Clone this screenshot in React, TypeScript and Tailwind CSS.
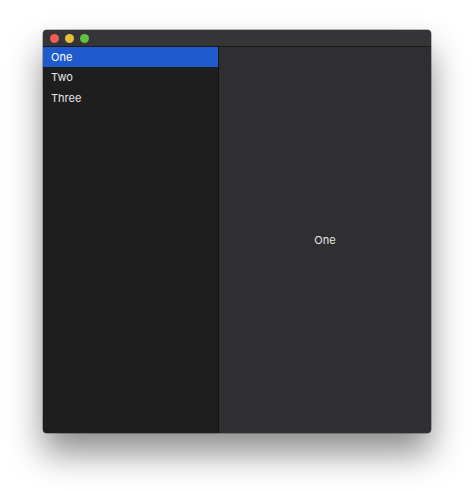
const items = ['One', 'Two', 'Three'];

export default function App() {
  return (
    <div className="w-[474px] h-[491px] bg-white pt-[30px] pl-[43px] font-['Inter','Liberation_Sans',sans-serif]">
      {/* Window */}
      <div className="w-[388px] h-[403px] flex flex-col rounded-[4px] overflow-hidden bg-[#2f2f31] shadow-[0_20px_34px_rgba(0,0,0,0.45),0_0_0_0.5px_rgba(0,0,0,0.5)]">
        {/* Title bar */}
        <div className="h-[17px] shrink-0 flex items-center gap-[6px] pl-[7px] pt-[1px] bg-[#353436] border-b border-[#1a1a1a]">
          <span className="w-[9px] h-[9px] rounded-full bg-[#ed5f56]" />
          <span className="w-[9px] h-[9px] rounded-full bg-[#e6bf3b]" />
          <span className="w-[9px] h-[9px] rounded-full bg-[#5fc045]" />
        </div>
        <div className="flex flex-1 min-h-0">
          {/* Sidebar */}
          <div className="w-[176px] shrink-0 bg-[#1e1e1f] border-r border-[#121212]">
            {items.map((item, i) => (
              <div
                key={item}
                className={`h-[20px] mb-[0.5px] flex items-center pl-[8px] text-[11px] ${
                  i === 0 ? 'bg-[#1f5bcc] text-white' : 'text-[#e6e6e6]'
                }`}
              >
                {item}
              </div>
            ))}
          </div>
          {/* Detail */}
          <div className="flex-1 flex items-center justify-center text-[11px] text-[#e6e6e6]">
            One
          </div>
        </div>
      </div>
    </div>
  );
}
